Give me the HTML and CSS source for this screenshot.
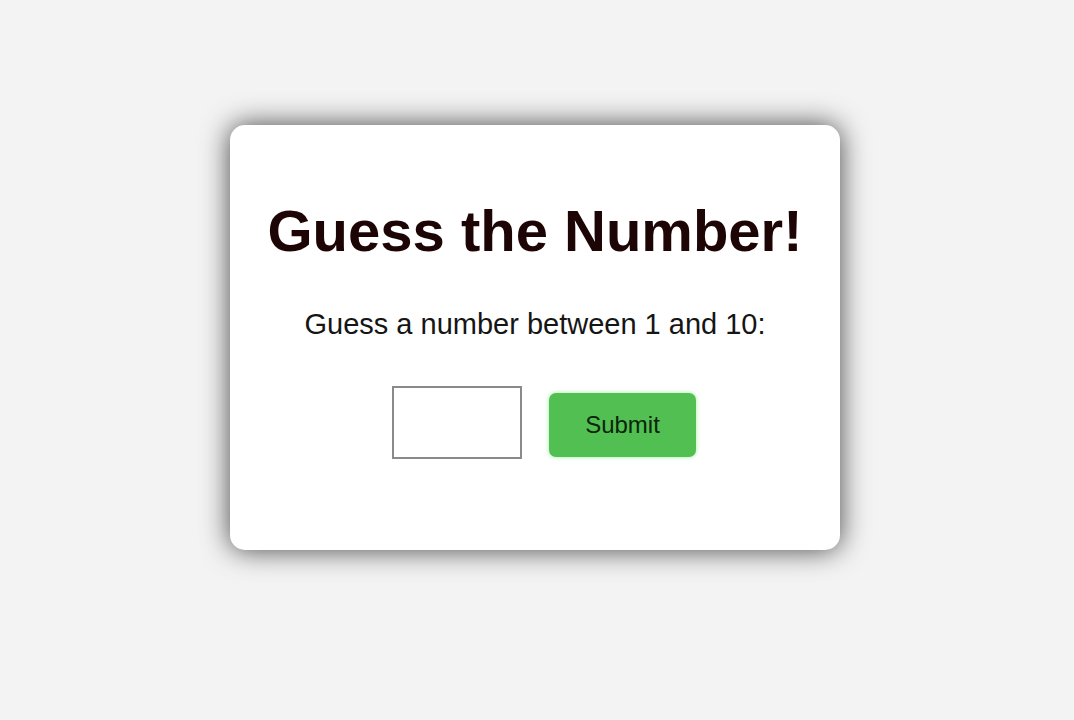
FILE: index.html
```html
<!DOCTYPE html>
<html>
<head>
<meta charset="utf-8">
<link rel="stylesheet" href="styles.css">
</head>
<body>
<div class="card">
  <h1 class="title">Guess the Number!</h1>
  <p class="prompt">Guess a number between 1 and 10:</p>
  <div class="row">
    <input class="guess" type="text">
    <button class="submit">Submit</button>
  </div>
</div>
</body>
</html>
```
FILE: styles.css
```css
html, body {
  margin: 0;
  padding: 0;
  background: #f3f3f3;
  font-family: "Liberation Sans", Arial, sans-serif;
}
body {
  display: flex;
  justify-content: center;
  align-items: flex-start;
  padding-right: 4px;
  height: 720px;
  box-sizing: border-box;
}
.card {
  margin-top: 125px;
  width: 610px;
  box-sizing: border-box;
  background: #ffffff;
  border-radius: 15px;
  box-shadow: 0 0 28px rgba(0, 0, 0, 0.72);
  padding: 40px 20px 91px;
  display: flex;
  flex-direction: column;
  align-items: center;
}
.title {
  margin: 33px 0 0;
  font-size: 58px;
  line-height: 66px;
  font-weight: bold;
  color: #1e0505;
}
.prompt {
  margin: 43px 0 0;
  font-size: 29px;
  line-height: 34px;
  color: #151515;
}
.row {
  margin-top: 45px;
  display: flex;
  align-items: flex-start;
  gap: 27px;
  padding-left: 18px;
}
.guess {
  width: 130px;
  height: 73px;
  box-sizing: border-box;
  border: 2px solid #8a8a8a;
  background: #fff;
  margin: 0;
}
.submit {
  margin-top: 7px;
  width: 147px;
  height: 64px;
  border: none;
  border-radius: 7px;
  background: #52bf52;
  box-shadow: 0 0 4px rgba(90, 230, 90, 0.6);
  color: #0b250b;
  font-family: "Liberation Sans", Arial, sans-serif;
  font-size: 24px;
  padding: 0;
}
```
